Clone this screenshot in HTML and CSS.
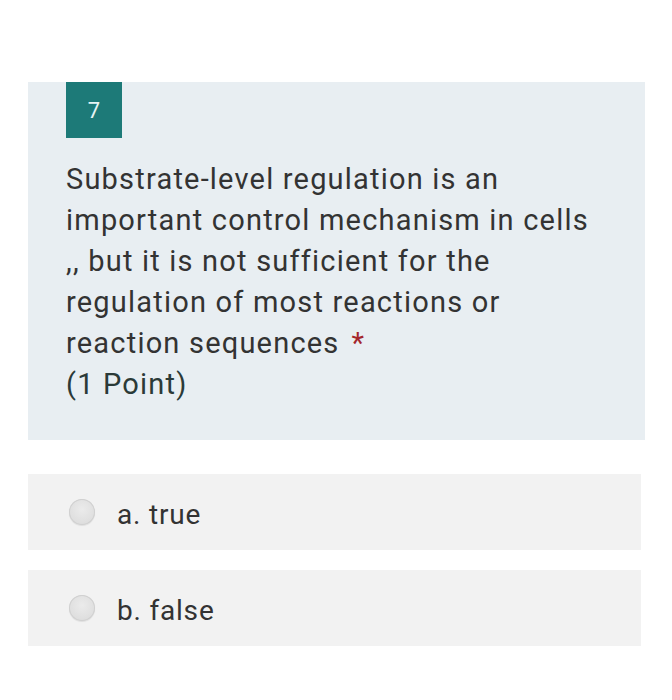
FILE: index.html
```html
<!DOCTYPE html>
<html>
<head>
<meta charset="utf-8">
<link rel="stylesheet" href="styles.css">
</head>
<body>
<div class="page">
  <div class="question">
    <div class="badge">7</div>
    <div class="qtext">Substrate-level regulation is an important control mechanism in cells ,, but it is not sufficient for the regulation of most reactions or reaction sequences<span class="req">*</span></div>
    <div class="points">(1 Point)</div>
  </div>
  <div class="option"><span class="radio"></span><span class="label">a. true</span></div>
  <div class="option"><span class="radio"></span><span class="label">b. false</span></div>
</div>
</body>
</html>
```
FILE: styles.css
```css
html, body { margin: 0; padding: 0; background: #fff; }
body { font-family: Roboto, "Noto Sans", sans-serif; color: #333; }
.page { padding: 82px 28px 0 28px; width: 617px; }
.question {
  background: #e8eef2;
  padding: 0 38px 38px 38px;
  height: 320px;
}
.badge {
  width: 56px; height: 56px;
  background: #1d7a78;
  color: #e6f4f4;
  font-size: 22px;
  display: flex; align-items: center; justify-content: center;
}
.qtext {
  margin-top: 21px;
  font-size: 29px;
  letter-spacing: 1.2px;
  line-height: 41px;
  color: #333;
  width: 535px;
}
.req { color: #a4262c; margin-left: 12px; letter-spacing: 0; }
.points { font-size: 29px; letter-spacing: 1.2px; line-height: 41px; color: #2b3a38; }
.option {
  background: #f2f2f2;
  height: 76px;
  margin-top: 34px;
  display: flex; align-items: center;
  padding-left: 41px;
  width: 572px;
}
.option + .option { margin-top: 20px; }
.radio {
  width: 26px; height: 26px; border-radius: 50%;
  background: radial-gradient(circle at 50% 40%, #ebebeb 0%, #dedede 70%, #d2d2d2 100%);
  box-shadow: inset 0 0 0 1px #d0d0d0, 0 1px 1px rgba(0,0,0,0.08);
  margin-right: 22px;
}
.label { font-size: 28px; letter-spacing: 0.8px; color: #333; padding-top: 4px; }
```
